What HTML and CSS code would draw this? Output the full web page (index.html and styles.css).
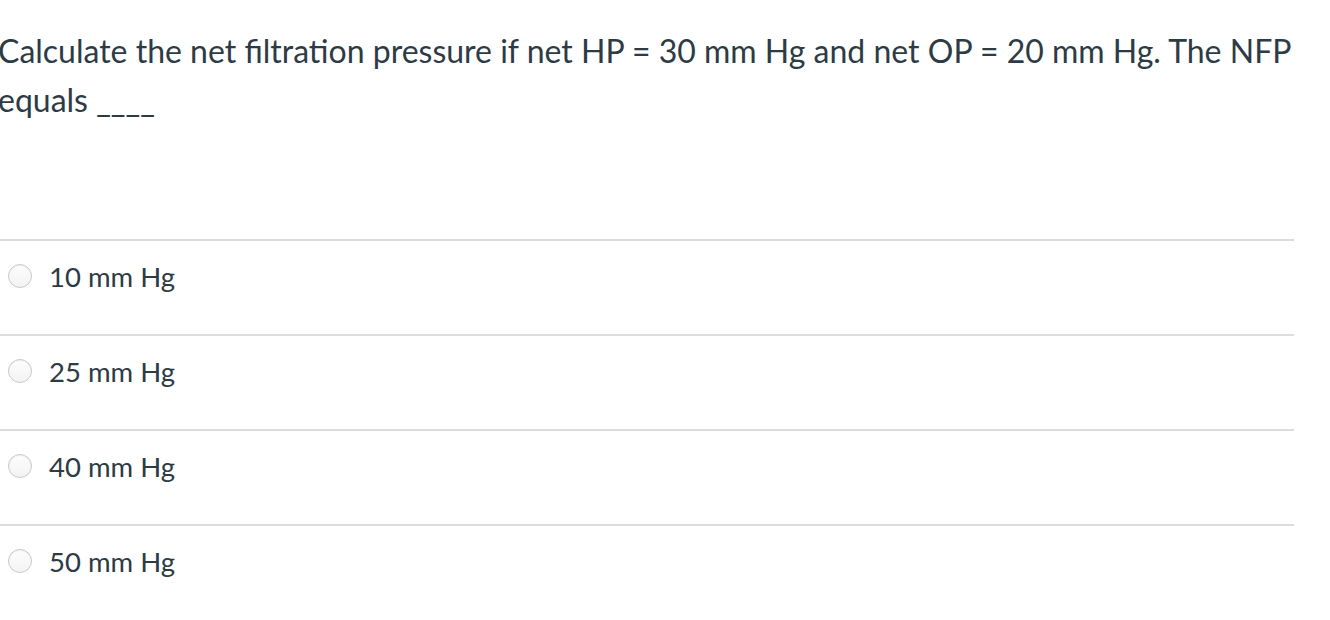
FILE: index.html
```html
<!DOCTYPE html>
<html>
<head>
<meta charset="utf-8">
<link rel="stylesheet" href="styles.css">
</head>
<body>
<div class="question">
  <div class="question-text">Calculate the net filtration pressure if net HP = 30 mm Hg and net OP = 20 mm Hg. The NFP equals <span class="blank">____</span></div>
  <div class="answers">
    <label class="answer"><span class="radio"></span><span class="answer-label">10 mm Hg</span></label>
    <label class="answer"><span class="radio"></span><span class="answer-label">25 mm Hg</span></label>
    <label class="answer"><span class="radio"></span><span class="answer-label">40 mm Hg</span></label>
    <label class="answer"><span class="radio"></span><span class="answer-label">50 mm Hg</span></label>
  </div>
</div>
</body>
</html>
```
FILE: styles.css
```css
html, body {
  margin: 0;
  padding: 0;
  background: #fff;
}
body {
  font-family: Lato, "Open Sans", sans-serif;
  color: #2d3b45;
}
.question {
  width: 1296px;
}
.question-text {
  font-size: 32px;
  line-height: 49px;
  padding-top: 26px;
  margin-left: -2px;
  width: 1310px;
}
.answers {
  margin-top: 115px;
  width: 1294px;
}
.answer {
  display: flex;
  align-items: flex-start;
  height: 93px;
  border-top: 2px solid #dcdcdc;
}
.radio {
  flex: none;
  width: 24px;
  height: 24px;
  border-radius: 50%;
  border: 1px solid #c9c9c9;
  background: linear-gradient(#fdfdfd, #f3f3f3);
  box-shadow: inset 0 1px 1px rgba(0, 0, 0, 0.06);
  margin-left: 8px;
  margin-right: 17px;
  margin-top: 23px;
  box-sizing: border-box;
}
.answer-label {
  font-size: 27.5px;
  line-height: 1.2;
  padding-top: 19px;
}
```
